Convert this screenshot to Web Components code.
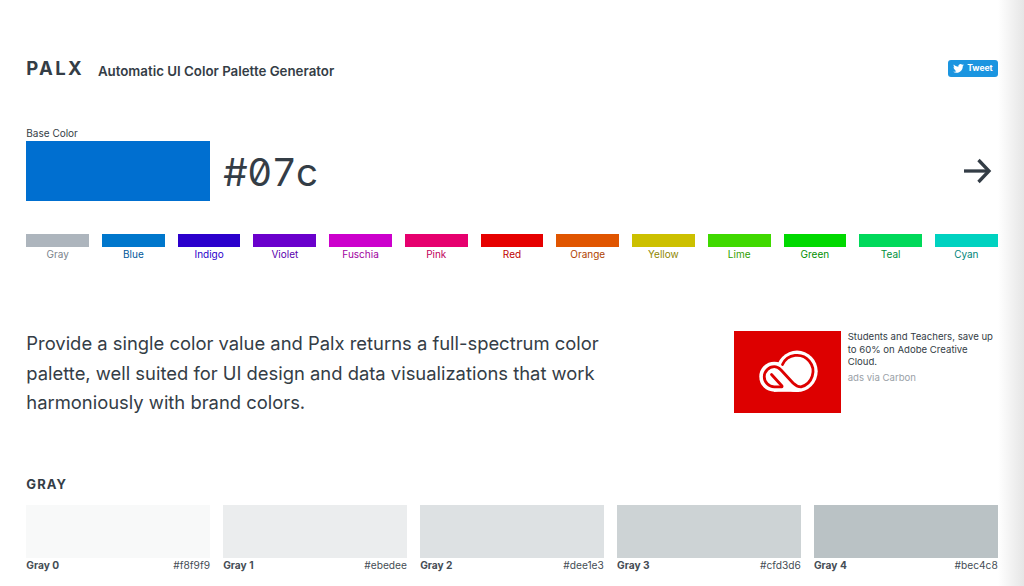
<!doctype html>
<html>
<head>
<meta charset="utf-8">
<title>Palx</title>
<style>
  html, body { margin: 0; height: 100%; background: #fff; overflow: hidden; }
  body { font-family: Inter, "Liberation Sans", sans-serif; color: #343d46; }
</style>
</head>
<body>
<palx-app></palx-app>
<script>
const HUES = [
  ["Gray", "#adb5bd", "#7b848c"],
  ["Blue", "#0077cc", "#00589a"],
  ["Indigo", "#2b00cc", "#2b00cc"],
  ["Violet", "#6a00cc", "#5a00ad"],
  ["Fuschia", "#cc00cc", "#a000a0"],
  ["Pink", "#e6006e", "#c0005c"],
  ["Red", "#e60000", "#c00000"],
  ["Orange", "#e05500", "#b04300"],
  ["Yellow", "#ccc000", "#8f8700"],
  ["Lime", "#3fd900", "#2f9e00"],
  ["Green", "#00d900", "#008f00"],
  ["Teal", "#00d95a", "#008f3c"],
  ["Cyan", "#00d2c0", "#00857a"],
];

// chip is what the screenshot shows, a bit off from the printed hex
const GRAYS = [
  ["Gray 0", "#f8f9f9", "#f8f9f9"],
  ["Gray 1", "#ebedee", "#ebedee"],
  ["Gray 2", "#dee1e3", "#dde1e3"],
  ["Gray 3", "#cfd3d6", "#cdd3d5"],
  ["Gray 4", "#bec4c8", "#bac2c5"],
];

class TweetButton extends HTMLElement {
  constructor() {
    super();
    this.attachShadow({ mode: "open" });
    this.shadowRoot.innerHTML = /* html */`
    <style>
      :host {
        display: flex;
        align-items: center;
        gap: 3px;
        box-sizing: border-box;
        width: 50px;
        height: 17px;
        padding-left: 5.5px;
        border-radius: 3px;
        background: #1b95e0;
        color: #fff;
        font-size: 8.5px;
        font-weight: 700;
      }
      svg { width: 11px; height: 9px; fill: #fff; }
    </style>
    <svg viewBox="0 0 24 20"><path d="M24 2.400c-.9.4-1.800.7-2.800.8 1-.6 1.800-1.600 2.200-2.700-1 .6-2 1-3.100 1.200C19.300.7 18 0 16.600 0c-2.700 0-4.900 2.200-4.900 4.900 0 .4 0 .8.100 1.100C7.700 5.800 4.100 3.900 1.700.9c-.4.700-.7 1.600-.7 2.500 0 1.700.9 3.200 2.200 4.100-.8 0-1.600-.2-2.200-.6v.1c0 2.400 1.700 4.400 3.900 4.800-.4.100-.8.200-1.300.2-.3 0-.6 0-.9-.1.600 2 2.400 3.400 4.600 3.400-1.700 1.300-3.800 2.100-6.100 2.100-.4 0-.8 0-1.200-.1C2.200 18.700 4.800 19.500 7.500 19.500c9.100 0 14-7.500 14-14v-.6c1-.7 1.800-1.500 2.500-2.500z"/></svg>
    <span>Tweet</span>
    `;
  }
}

class PalxHeader extends HTMLElement {
  constructor() {
    super();
    this.attachShadow({ mode: "open" });
    this.shadowRoot.innerHTML = /* html */`
    <style>
      :host {
        display: flex;
        align-items: center;
        height: 18px;
      }
      h1 {
        margin: 0 14px 0 0;
        font-size: 18.500px;
        font-weight: 700;
        letter-spacing: 2.300px;
      }
      h2 {
        flex: 1;
        margin: 5px 0 0;
        font-size: 13.300px;
        font-weight: 600;
      }
    </style>
    <h1>PALX</h1>
    <h2>Automatic UI Color Palette Generator</h2>
    <tweet-button></tweet-button>
    `;
  }
}

class BaseColor extends HTMLElement {
  constructor() {
    super();
    this.attachShadow({ mode: "open" });
    this.shadowRoot.innerHTML = /* html */`
    <style>
      :host { display: block; }
      label {
        display: block;
        height: 14px;
        font-size: 10px;
        line-height: 13px;
      }
      .row {
        display: flex;
        align-items: center;
        gap: 13px;
        height: 60px;
      }
      .chip { width: 184px; height: 60px; background: #006fd0; }
      .value {
        flex: 1;
        padding-top: 2px;
        font-size: 38.500px;
        line-height: 60px;
        letter-spacing: -0.500px;
        font-variant-numeric: slashed-zero tabular-nums;
      }
      svg { width: 30px; height: 30px; margin-right: 4.700px; }
    </style>
    <label>Base Color</label>
    <div class="row">
      <div class="chip"></div>
      <div class="value">#07c</div>
      <svg viewBox="0 0 30 30" fill="none" stroke="#343d46" stroke-width="3.300">
        <path d="M1 15h25"/>
        <path d="M15.500 4 26 15 15.500 26"/>
      </svg>
    </div>
    `;
  }
}

class HueSwatch extends HTMLElement {
  constructor() {
    super();
    this.attachShadow({ mode: "open" });
    const color = this.getAttribute("color");
    const ink = this.getAttribute("ink");
    this.shadowRoot.innerHTML = /* html */`
    <style>
      :host {
        display: block;
        font-size: 10px;
        line-height: 14px;
        text-align: center;
        color: ${ink};
      }
      div { height: 13px; background: ${color}; }
    </style>
    <div></div>
    <slot></slot>
    `;
  }
}

class HueRow extends HTMLElement {
  constructor() {
    super();
    this.attachShadow({ mode: "open" });
    this.shadowRoot.innerHTML = /* html */`
    <style>
      :host {
        display: grid;
        grid-template-columns: repeat(13, 1fr);
        gap: 13px;
      }
    </style>
    ${HUES.map(([name, color, ink]) => `<hue-swatch color="${color}" ink="${ink}">${name}</hue-swatch>`).join("")}
    `;
  }
}

class CarbonAd extends HTMLElement {
  constructor() {
    super();
    this.attachShadow({ mode: "open" });
    this.shadowRoot.innerHTML = /* html */`
    <style>
      :host {
        display: flex;
        gap: 7px;
        width: 264px;
        font-size: 9.600px;
        line-height: 12.500px;
      }
      .logo {
        flex: none;
        width: 107px;
        height: 82px;
        background: #dd0000;
      }
      svg { display: block; width: 107px; height: 82px; }
      .copy { width: 150px; }
      .via { margin-top: 3.500px; color: #9aa1a7; }
    </style>
    <div class="logo">
      <svg viewBox="0 0 107 82">
        <g fill="#fff">
          <circle cx="40.300" cy="45.700" r="15"/>
          <circle cx="63" cy="40.300" r="20.700"/>
          <rect x="40" y="45" width="25" height="15.800"/>
        </g>
        <g fill="none" stroke="#dd0000" stroke-width="2.800" stroke-linecap="round" stroke-linejoin="round">
          <path d="M48 55.800L40.300 55.800A10 10 0 0 1 40.300 35.700C43 35.700 45 37 47 39L59 52C62 55 64 55.800 67 55.800A16 16 0 1 0 48.500 33.500"/>
          <path d="M37.500 43.500 48 55"/>
        </g>
      </svg>
    </div>
    <div class="copy">
      Students and Teachers, save up to 60% on Adobe Creative Cloud.
      <div class="via">ads via Carbon</div>
    </div>
    `;
  }
}

class IntroBlock extends HTMLElement {
  constructor() {
    super();
    this.attachShadow({ mode: "open" });
    this.shadowRoot.innerHTML = /* html */`
    <style>
      :host {
        display: flex;
        justify-content: space-between;
        align-items: flex-start;
      }
      p {
        width: 590px;
        margin: -2px 0 0;
        font-size: 18.400px;
        line-height: 29.500px;
      }
    </style>
    <p>Provide a single color value and Palx returns a full-spectrum color palette, well suited for UI design and data visualizations that work harmoniously with brand colors.</p>
    <carbon-ad></carbon-ad>
    `;
  }
}

class ColorCard extends HTMLElement {
  constructor() {
    super();
    this.attachShadow({ mode: "open" });
    const color = this.getAttribute("color");
    const chip = this.getAttribute("chip");
    this.shadowRoot.innerHTML = /* html */`
    <style>
      :host {
        display: block;
        font-size: 10.200px;
        line-height: 15px;
      }
      .chip { height: 53px; background: ${chip}; }
      .meta { display: flex; justify-content: space-between; }
      b { font-weight: 700; color: #454d55; }
      span { color: #454d55; }
    </style>
    <div class="chip"></div>
    <div class="meta"><b><slot></slot></b><span>${color}</span></div>
    `;
  }
}

class PaletteSection extends HTMLElement {
  constructor() {
    super();
    this.attachShadow({ mode: "open" });
    this.shadowRoot.innerHTML = /* html */`
    <style>
      :host { display: block; }
      h3 {
        margin: 0 0 14px;
        font-size: 13px;
        line-height: 14px;
        font-weight: 700;
        letter-spacing: 1.100px;
      }
      .grid {
        display: grid;
        grid-template-columns: repeat(5, 1fr);
        gap: 13.200px;
      }
    </style>
    <h3>GRAY</h3>
    <div class="grid">
      ${GRAYS.map(([name, color, chip]) => `<color-card color="${color}" chip="${chip}">${name}</color-card>`).join("")}
    </div>
    `;
  }
}

class PalxApp extends HTMLElement {
  constructor() {
    super();
    this.attachShadow({ mode: "open" });
    this.shadowRoot.innerHTML = /* html */`
    <style>
      :host {
        display: block;
        position: relative;
        box-sizing: border-box;
        height: 586px;
        padding: 59px 26.300px 0 26.300px;
      }
      base-color { margin-top: 50px; }
      hue-row { margin-top: 33px; }
      intro-block { margin-top: 70px; }
      palette-section { margin-top: 59px; }
      .edge {
        position: absolute;
        top: 0;
        right: 0;
        bottom: 0;
        width: 26px;
        background: linear-gradient(to right, #fff, #e6e6e6);
      }
    </style>
    <div class="edge"></div>
    <palx-header></palx-header>
    <base-color></base-color>
    <hue-row></hue-row>
    <intro-block></intro-block>
    <palette-section></palette-section>
    `;
  }
}

customElements.define("tweet-button", TweetButton);
customElements.define("palx-header", PalxHeader);
customElements.define("base-color", BaseColor);
customElements.define("hue-swatch", HueSwatch);
customElements.define("hue-row", HueRow);
customElements.define("carbon-ad", CarbonAd);
customElements.define("intro-block", IntroBlock);
customElements.define("color-card", ColorCard);
customElements.define("palette-section", PaletteSection);
customElements.define("palx-app", PalxApp);
</script>
</body>
</html>
